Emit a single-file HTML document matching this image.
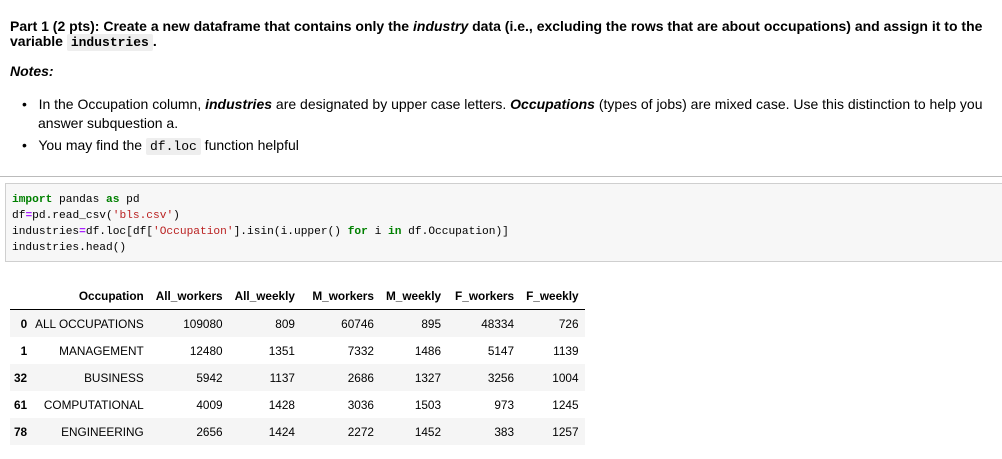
<!DOCTYPE html>
<html><head><meta charset="utf-8"><style>
body{margin:0;width:1002px;height:459px;background:#fff;font-family:"Liberation Sans",Arial,sans-serif;color:#000;position:relative;overflow:hidden}
.a{position:absolute;white-space:nowrap}
code{font-family:"Liberation Mono",monospace;background:#eee;padding:1px 4px;border-radius:2px;font-size:13px}
.h{font-weight:bold;font-size:14px;left:10px;line-height:15px}
.b{font-size:14px;line-height:18px}
.pre{margin:0;font-family:"Liberation Mono",monospace;font-size:11.2px;line-height:16px}
.k{color:#008000;font-weight:bold}.o{color:#aa22ff;font-weight:bold}.s{color:#ba2121}
table{position:absolute;left:10px;top:283px;border-collapse:collapse;font-size:11.8px}
td,th{text-align:right;padding:0 6px;height:27px;white-space:nowrap}
th{font-weight:bold}
thead th{border-bottom:1px solid #000;height:26px}
tbody tr:nth-child(odd){background:#f5f5f5}
</style></head><body>
<div class="a h" style="top:19px">Part 1 (2 pts): Create a new dataframe that contains only the <i>industry</i> data (i.e., excluding the rows that are about occupations) and assign it to the<br>variable <code style="font-weight:bold">industries</code>.</div>
<div class="a h" style="top:64px"><i>Notes:</i></div>
<div class="a b" style="left:22px;top:95px">•&nbsp;&nbsp; In the Occupation column, <b><i>industries</i></b> are designated by upper case letters. <b><i>Occupations</i></b> (types of jobs) are mixed case. Use this distinction to help you</div>
<div class="a b" style="left:38px;top:114px">answer subquestion a.</div>
<div class="a b" style="left:22px;top:136px">•&nbsp;&nbsp; You may find the <code>df.loc</code> function helpful</div>
<div class="a" style="left:0;top:176px;width:1002px;height:1px;background:#bbb"></div>
<div class="a" style="left:5px;top:183px;width:997px;height:79px;background:#f7f7f7;border:1px solid #cfcfcf;border-right:none;box-sizing:border-box"></div>
<div class="a pre" style="left:12px;top:192px;white-space:pre"><span class="k">import</span> pandas <span class="k">as</span> pd<br>df<span class="o">=</span>pd.read_csv(<span class="s">'bls.csv'</span>)<br>industries<span class="o">=</span>df.loc[df[<span class="s">'Occupation'</span>].isin(i.upper() <span class="k">for</span> i <span class="k">in</span> df.Occupation)]<br>industries.head()</div>
<table>
<thead><tr><th></th><th>Occupation</th><th>All_workers</th><th>All_weekly</th><th>M_workers</th><th>M_weekly</th><th>F_workers</th><th>F_weekly</th></tr></thead>
<tbody>
<tr><th style="padding-left:4px;padding-right:4px">0</th><td style="padding-left:4px">ALL OCCUPATIONS</td><td style="width:66px">109080</td><td style="width:56px">809</td><td style="width:67px">60746</td><td style="width:55px">895</td><td style="width:61px">48334</td><td style="width:52px">726</td></tr>
<tr><th style="padding-left:4px;padding-right:4px">1</th><td>MANAGEMENT</td><td>12480</td><td>1351</td><td>7332</td><td>1486</td><td>5147</td><td>1139</td></tr>
<tr><th style="padding-left:4px;padding-right:4px">32</th><td>BUSINESS</td><td>5942</td><td>1137</td><td>2686</td><td>1327</td><td>3256</td><td>1004</td></tr>
<tr><th style="padding-left:4px;padding-right:4px">61</th><td>COMPUTATIONAL</td><td>4009</td><td>1428</td><td>3036</td><td>1503</td><td>973</td><td>1245</td></tr>
<tr><th style="padding-left:4px;padding-right:4px">78</th><td>ENGINEERING</td><td>2656</td><td>1424</td><td>2272</td><td>1452</td><td>383</td><td>1257</td></tr>
</tbody></table>
</body></html>
